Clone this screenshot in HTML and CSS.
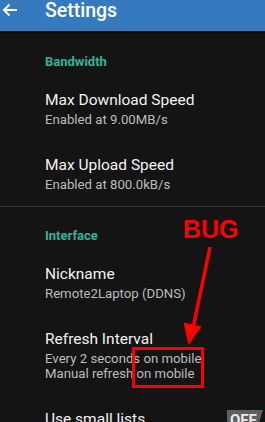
FILE: index.html
```html
<!DOCTYPE html>
<html lang="en">
<head>
    <meta charset="UTF-8">
    <meta name="viewport" content="width=device-width, initial-scale=1.0">
    <title>Settings</title>
    <link rel="stylesheet" href="styles.css">
</head>
<body>
    <div class="screen">
        <div class="toolbar">
            <svg class="back" width="16" height="20" viewBox="0 0 16 20">
                <path d="M3 10H16M8.5 4.5L3 10L8.5 15.5" fill="none" stroke="#fff" stroke-width="2"/>
            </svg>
            <div class="title">Settings</div>
        </div>

        <div class="section-title">Bandwidth</div>
        <div class="item">
            <div class="item-title">Max Download Speed</div>
            <div class="item-sub">Enabled at 9.00MB/s</div>
        </div>
        <div class="item">
            <div class="item-title">Max Upload Speed</div>
            <div class="item-sub">Enabled at 800.0kB/s</div>
        </div>

        <div class="divider"></div>

        <div class="section-title">Interface</div>
        <div class="item">
            <div class="item-title">Nickname</div>
            <div class="item-sub">Remote2Laptop (DDNS)</div>
        </div>
        <div class="item">
            <div class="item-title">Refresh Interval</div>
            <div class="item-sub">Every 2 seconds on mobile</div>
            <div class="item-sub">Manual refresh on mobile</div>
        </div>
        <div class="item item-row">
            <div class="item-title">Use small lists</div>
            <div class="toggle">OFF</div>
        </div>

        <!-- annotation drawn over the screenshot -->
        <div class="bug-label">BUG</div>
        <svg class="annotation" width="265" height="422" viewBox="0 0 265 422">
            <line x1="210" y1="247" x2="193" y2="328" stroke="#f00" stroke-width="3.5"/>
            <polygon points="188.5,345 183.5,322.5 201.5,326.5" fill="#f00"/>
            <rect x="133.5" y="348.5" width="69" height="38" fill="none" stroke="#f00" stroke-width="3"/>
        </svg>
    </div>
</body>
</html>
```

FILE: styles.css
```css
html, body {
    margin: 0;
    padding: 0;
    background-color: #141414;
}

body {
    font-family: Roboto, "Noto Sans", sans-serif;
}

.screen {
    position: relative;
    width: 265px;
    height: 422px;
    overflow: hidden;
    background-color: #141414;
}

.toolbar {
    display: flex;
    align-items: flex-start;
    height: 31px;
    background-color: #3579bf;
    border-bottom: 2px solid #0a0a0a;
}

.back {
    margin-left: 1px;
    width: 16px;
    height: 20px;
}

.title {
    margin-left: 28px;
    color: #fff;
    font-size: 19.5px;
    font-weight: 500;
    line-height: 21px;
}

.section-title {
    padding: 21px 0 6px 45px;
    color: #2db49d;
    font-size: 13px;
    font-weight: bold;
    line-height: 16px;
}

.item {
    padding: 14px 0 14px 45px;
}

.item-row {
    display: flex;
    justify-content: space-between;
    align-items: flex-start;
}

.item-title {
    color: #f2f2f2;
    font-size: 15.5px;
    line-height: 20px;
}

.item-sub {
    margin-top: 2px;
    color: #bcbcbc;
    font-size: 13.2px;
    line-height: 15px;
}

.item-sub + .item-sub {
    margin-top: 0;
}

.divider {
    height: 1px;
    background-color: #333;
}

.toggle {
    width: 36px;
    height: 20px;
    margin-top: 1px;
    margin-right: 2px;
    padding-left: 3px;
    box-sizing: border-box;
    background-color: #5e5e5e;
    color: #e8e8e8;
    font-size: 15px;
    font-weight: bold;
    line-height: 20px;
    clip-path: polygon(0 0, 100% 0, 82% 100%, 0 100%);
}

.bug-label {
    position: absolute;
    left: 183px;
    top: 217px;
    color: #f00;
    font-family: "Liberation Sans", Arial, sans-serif;
    font-size: 25px;
    font-weight: bold;
    line-height: 25px;
}

.annotation {
    position: absolute;
    left: 0;
    top: 0;
    pointer-events: none;
}
```
